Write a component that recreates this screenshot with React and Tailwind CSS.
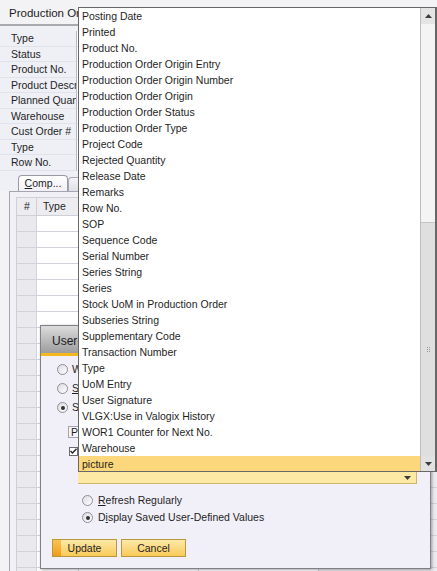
import React from 'react';

const FIELDS = ['Type', 'Status', 'Product No.', 'Product Description', 'Planned Quantity', 'Warehouse', 'Cust Order #', 'Type', 'Row No.'];

const ITEMS = [
  'Posting Date', 'Printed', 'Product No.', 'Production Order Origin Entry', 'Production Order Origin Number',
  'Production Order Origin', 'Production Order Status', 'Production Order Type', 'Project Code', 'Rejected Quantity',
  'Release Date', 'Remarks', 'Row No.', 'SOP', 'Sequence Code', 'Serial Number', 'Series String', 'Series',
  'Stock UoM in Production Order', 'Subseries String', 'Supplementary Code', 'Transaction Number', 'Type',
  'UoM Entry', 'User Signature', 'VLGX:Use in Valogix History', 'WOR1 Counter for Next No.', 'Warehouse', 'picture',
];

const GRID_ROWS = Array.from({ length: 23 });

const Radio = ({ checked }) => (
  <span className="flex h-[11px] w-[11px] shrink-0 items-center justify-center rounded-full border border-[#8d8e98] bg-gradient-to-br from-[#dcdce2] to-white">
    {checked && <span className="h-[4px] w-[4px] rounded-full bg-[#333]" />}
  </span>
);

const Arrow = ({ up }) => (
  <svg width="7" height="4" viewBox="0 0 7 4">
    <path d={up ? 'M0 4 L3.5 0 L7 4 Z' : 'M0 0 L7 0 L3.5 4 Z'} fill="#3c3c3c" />
  </svg>
);

export default function App() {
  return (
    <div className="relative h-[571px] w-[437px] overflow-hidden bg-[#f3f3f5] font-['Liberation_Sans',Arial,sans-serif] text-[10.5px] text-[#1e1e1e]">
      {/* background window */}
      <div className="h-[24px] pl-[9px] text-[11.5px] leading-[26px] text-[#222]">Production Order</div>
      <div className="h-[2px] bg-[#a9a9ae]" />
      <div className="bg-[#eff0f6] pt-[5px]">
        {FIELDS.map((f, i) => (
          <div key={i} className="flex h-[15.5px]">
            <div className="w-[77px] overflow-hidden whitespace-nowrap border-b border-r border-b-[#e2e2ec] border-r-[#b6b6c4] pl-[11px] leading-[15px]">
              {f}
            </div>
            <div className="flex-1 border-b border-[#e2e2ec] bg-white" />
          </div>
        ))}
      </div>

      {/* tabs */}
      <div className="flex h-[20.5px] items-end bg-[#eff0f6] pl-[18px]">
        <div className="flex h-[16px] w-[50px] items-center justify-center rounded-t-[4px] border border-b-0 border-[#9a9aa6] bg-gradient-to-b from-white to-[#f1f1f5] leading-none">
          <span><span className="underline">C</span>omp...</span>
        </div>
        <div className="h-[14px] w-[60px] rounded-t-[4px] border border-b-0 border-[#a8a8b4] bg-gradient-to-b from-[#f4f4f8] to-[#dedee6]" />
      </div>

      {/* grid panel */}
      <div className="ml-[9px] h-[400px] border-l border-t border-[#a4a4b2] bg-[#f0f0f6] pl-[6px] pt-[5px]">
        <div className="border-l border-t border-[#cfcfd8]">
          <div className="flex h-[18px]">
            <div className="w-[20px] border-b border-r border-[#cfcfd8] bg-[#ececf1] pl-[7px] leading-[17px]">#</div>
            <div className="w-[42px] border-b border-r border-[#cfcfd8] bg-[#ececf1] pl-[6px] leading-[17px]">Type</div>
            <div className="w-[120px] border-b border-r border-[#cfcfd8] bg-[#ececf1]" />
            <div className="w-[120px] border-b border-r border-[#cfcfd8] bg-[#ececf1]" />
            <div className="flex-1 border-b border-[#cfcfd8] bg-[#ececf1]" />
          </div>
          {GRID_ROWS.map((_, i) => (
            <div key={i} className="flex h-[16px]">
              <div className="w-[20px] border-b border-r border-[#d2d2da] bg-[#e9e9ee]" />
              <div className="w-[42px] border-b border-r border-[#d2d2da] bg-white" />
              <div className="w-[120px] border-b border-r border-[#d2d2da] bg-white" />
              <div className="w-[120px] border-b border-r border-[#d2d2da] bg-white" />
              <div className="flex-1 border-b border-[#d2d2da] bg-[#ececf0]" />
            </div>
          ))}
        </div>
      </div>

      {/* User-Defined Values dialog */}
      <div className="absolute left-[40px] top-[325px] w-[391px] border border-[#7f7f88] bg-[#f1f0f9] shadow-[1px_1px_3px_rgba(0,0,0,0.35)]">
        <div className="h-[27px] bg-gradient-to-b from-[#dcdcdc] to-[#9d9d9f] pl-[11px] text-[12px] leading-[30px] text-[#1b1b1b]">
          User-Defined Values
        </div>
        <div className="h-[3px] bg-[#f4b71e]" />
        <div className="flex flex-col pt-[4px]">
          <div className="flex h-[19px] items-center gap-[4px] pl-[16px]">
            <Radio />
            <span>Without Search User-Defined Values</span>
          </div>
          <div className="flex h-[19px] items-center gap-[4px] pl-[16px]">
            <Radio />
            <span><span className="underline">S</span>earch in Existing User-Defined Values</span>
          </div>
          <div className="flex h-[19px] items-center gap-[4px] pl-[16px]">
            <Radio checked />
            <span>Search in Existing User-Defined Values According to Saved Query</span>
          </div>
          <div className="ml-[27px] mt-[9px] h-[12px] w-[220px] border border-[#a3a3ad] bg-[#f6f6fa] pl-[2px] leading-[10px]">
            Production Order
          </div>
          <div className="ml-[28px] mt-[8px] flex h-[10px] items-center gap-[5px]">
            <span className="flex h-[9px] w-[9px] items-center justify-center border border-[#6b6b73] bg-white">
              <svg width="7" height="6" viewBox="0 0 7 6">
                <path d="M0.5 3 L2.5 5 L6.5 0.8" stroke="#222" strokeWidth="1.4" fill="none" />
              </svg>
            </span>
            <span>Auto Refresh When Field Changes</span>
          </div>
          <div className="ml-[37px] mt-[16px] flex h-[12px] w-[339px] items-center justify-end border-b border-r border-[#cdb66a] bg-[#fde9a3] pr-[5px]">
            <Arrow />
          </div>
          <div className="mt-[8px] flex h-[17px] items-center gap-[5px] pl-[41px]">
            <Radio />
            <span><span className="underline">R</span>efresh Regularly</span>
          </div>
          <div className="flex h-[17px] items-center gap-[5px] pl-[41px]">
            <Radio checked />
            <span>D<span className="underline">i</span>splay Saved User-Defined Values</span>
          </div>
          <div className="mb-[11px] ml-[11px] mt-[13px] flex gap-[4px]">
            <button className="flex h-[18px] w-[65px] overflow-hidden border border-[#b8973f] bg-gradient-to-b from-[#fee9a8] to-[#f8ca55] text-[10.5px] text-[#1e1e1e]">
              <span className="h-full w-[8px] bg-gradient-to-b from-[#fbc451] to-[#ef9c16]" />
              <span className="flex-1 pr-[8px] text-center leading-[16px]">Update</span>
            </button>
            <button className="h-[18px] w-[65px] border border-[#b8973f] bg-gradient-to-b from-[#fee9a8] to-[#f8ca55] text-center text-[10.5px] leading-[16px] text-[#1e1e1e]">
              Cancel
            </button>
          </div>
        </div>
      </div>

      {/* open dropdown list */}
      <div className="absolute left-[78px] top-[7px] flex h-[465px] w-[359px] border border-r-2 border-[#676767] bg-white">
        <div className="flex-1 overflow-hidden">
          {ITEMS.map((it, i) => (
            <div
              key={i}
              className={`h-[16px] whitespace-nowrap pl-[3px] leading-[16px] ${i === ITEMS.length - 1 ? 'bg-[#fcd77b]' : ''}`}
            >
              {it}
            </div>
          ))}
        </div>
        <div className="flex w-[15px] flex-col border-l border-[#bdbdbd] bg-[#f4f4f4]">
          <div className="flex h-[16px] items-center justify-center bg-[#e4e4e4]">
            <Arrow up />
          </div>
          <div className="h-[198px]" />
          <div className="flex flex-1 items-center justify-center border-t border-[#c4c4c4] bg-[#dfdfdf]">
            <div className="grid grid-cols-2 gap-[1px] pt-[20px]">
              {Array.from({ length: 6 }).map((_, i) => (
                <span key={i} className="h-[1px] w-[1px] bg-[#9a9a9a]" />
              ))}
            </div>
          </div>
          <div className="flex h-[15px] items-center justify-center bg-[#e2e2e2]">
            <Arrow />
          </div>
        </div>
      </div>
    </div>
  );
}
